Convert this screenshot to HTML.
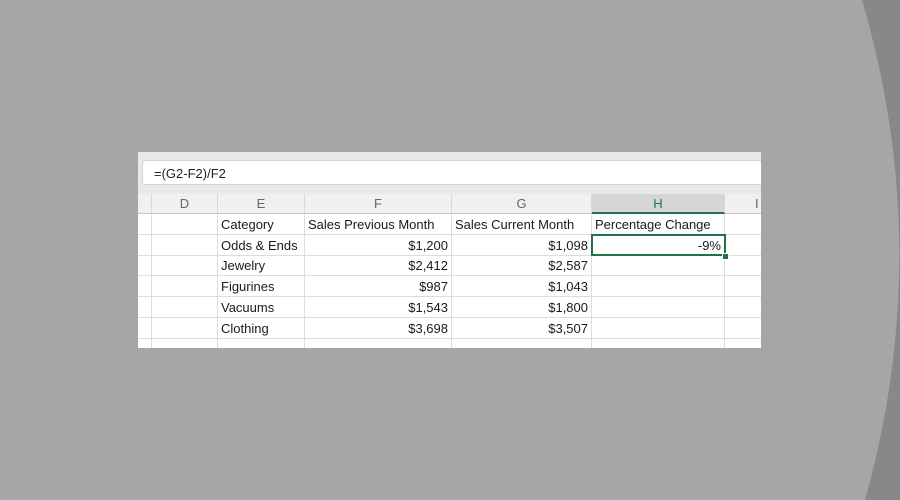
<!DOCTYPE html>
<html><head><style>
body{margin:0;width:900px;height:500px;overflow:hidden;background:#888;font-family:"Liberation Sans",sans-serif;}
svg.bg{position:absolute;left:0;top:0}
.sheet{position:absolute;left:138px;top:152px;width:623px;height:196px;background:#fff;overflow:hidden}
.fbar{position:absolute;left:0;top:0;width:623px;height:42px;background:#e9e9e9}
.fin{position:absolute;left:4px;top:8px;width:625px;height:25px;background:#fff;border:1px solid #d4d4d4;border-radius:3px;font-size:13px;line-height:25px;padding-left:11px;box-sizing:border-box;color:#222}
.hdr{position:absolute;top:42px;height:20px;background:#f0f0f0;border-right:1px solid #d8d8d8;border-bottom:1px solid #c8c8c8;box-sizing:border-box;text-align:center;font-size:13px;line-height:20px;color:#666}
.c{position:absolute;height:21px;border-right:1px solid #dcdcdc;border-bottom:1px solid #dcdcdc;box-sizing:border-box;font-size:13px;line-height:22px;color:#1a1a1a;padding:0 3px;white-space:nowrap}
.r{text-align:right}
</style></head><body>
<svg class="bg" width="900" height="500"><path d="M0 0 H862 Q935 250 865 500 H0 Z" fill="#a6a6a6"/></svg>
<div class="sheet">
<div class="fbar"><div class="fin">=(G2-F2)/F2</div></div>
<div class="hdr" style="left:0;width:14px"></div>
<div class="hdr" style="left:14px;width:66px">D</div>
<div class="hdr" style="left:80px;width:87px">E</div>
<div class="hdr" style="left:167px;width:147px">F</div>
<div class="hdr" style="left:314px;width:140px">G</div>
<div class="hdr" style="left:454px;width:133px;background:#d6d6d6;border-bottom:2px solid #217346;color:#217346">H</div>
<div class="hdr" style="left:587px;width:40px;text-align:left;padding-left:30px">I</div>
<div id="g"></div>
</div>
<script>
var cols=[[0,14],[14,66],[80,87],[167,147],[314,140],[454,133],[587,40]];
var data=[["","Category","Sales Previous Month","Sales Current Month","Percentage Change"],
["","Odds &amp; Ends","$1,200","$1,098","-9%"],["","Jewelry","$2,412","$2,587",""],["","Figurines","$987","$1,043",""],["","Vacuums","$1,543","$1,800",""],["","Clothing","$3,698","$3,507",""],["","","","",""]];
var h="";
for(var r=0;r<7;r++){var y=62+r*20.7;for(var c=0;c<7;c++){var t=c>0&&c<6?data[r][c-1]:"";var cls="c"+(r>0&&c>=3?" r":"");h+='<div class="'+cls+'" style="left:'+cols[c][0]+'px;top:'+y+'px;width:'+cols[c][1]+'px">'+t+'</div>';}}
h+='<div style="position:absolute;left:453px;top:82px;width:135px;height:22px;border:2px solid #217346;box-sizing:border-box"></div><div style="position:absolute;left:584px;top:101px;width:5px;height:5px;background:#217346;border:1px solid #fff"></div>';
document.getElementById("g").innerHTML=h;
</script>
</body></html>
